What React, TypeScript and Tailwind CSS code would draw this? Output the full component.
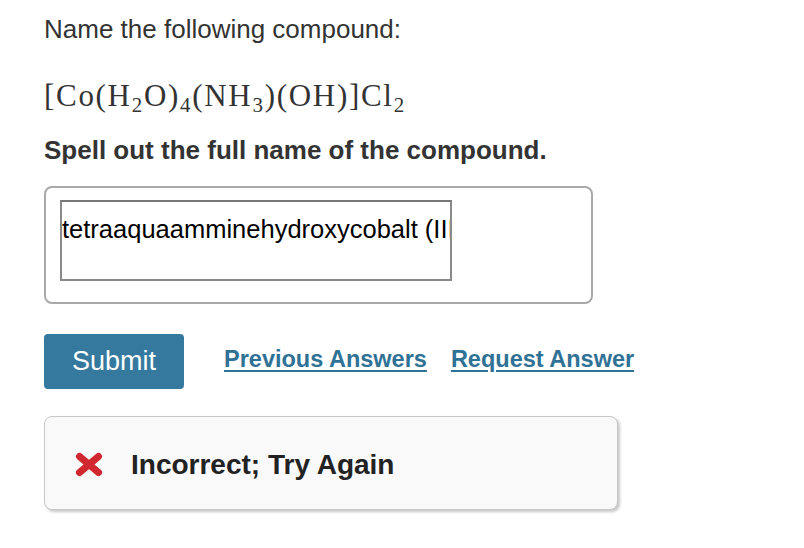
import React from "react";

const sans = { fontFamily: '"Liberation Sans", Arial, Helvetica, sans-serif' };

function Sub({ children }: { children: React.ReactNode }) {
  return <span className="relative top-[6px] text-[21px] leading-none">{children}</span>;
}

export default function App() {
  return (
    <div className="min-h-[548px] w-[804px] bg-white pl-[44px] pt-[14px]" style={sans}>
      <div className="text-[26px] leading-[30px] text-[#333]">Name the following compound:</div>

      <div
        className="mt-[32px] h-[40px] text-[31px] leading-[40px] tracking-[1.7px] text-[#333] whitespace-nowrap"
        style={{ fontFamily: '"Liberation Serif", "Times New Roman", serif' }}
      >
        [Co(H<Sub>2</Sub>O)<Sub>4</Sub>(NH<Sub>3</Sub>)(OH)]Cl<Sub>2</Sub>
      </div>

      <div className="mt-[19px] text-[26px] font-bold leading-[30px] text-[#333]">
        Spell out the full name of the compound.
      </div>

      <div className="mt-[21px] box-border h-[118px] w-[549px] rounded-[8px] border-2 border-[#a9a9a9] pl-[14px] pt-[12px]">
        <div className="box-border h-[81px] w-[392px] overflow-hidden whitespace-nowrap border-2 border-[#8a8a8a] border-t-[#777] pt-[12px] text-[25.5px] leading-[30px] text-black">
          tetraaquaamminehydroxycobalt (III
        </div>
      </div>

      <div className="mt-[30px] flex items-start">
        <button className="flex h-[55px] w-[140px] items-center justify-center rounded-[4px] bg-[#357a9e] text-[27px] text-white">
          Submit
        </button>
        <a className="ml-[40px] mt-[11px] text-[23.5px] font-bold leading-[28px] text-[#2f7296] underline decoration-2 underline-offset-[3px]">
          Previous Answers
        </a>
        <a className="ml-[24px] mt-[11px] text-[23.5px] font-bold leading-[28px] text-[#2f7296] underline decoration-2 underline-offset-[3px]">
          Request Answer
        </a>
      </div>

      <div className="mt-[27px] box-border flex h-[94px] w-[574px] items-start rounded-[8px] border border-[#c8c8c8] bg-[#f9f9f9] pl-[30px] pt-[35px] shadow-[2px_2px_3px_rgba(0,0,0,0.22)]">
        <svg width="28" height="25" viewBox="0 0 28 25" className="shrink-0">
          <path d="M4.5 4.5 L23.5 20.5 M23.5 4.5 L4.5 20.5" stroke="#d0282e" strokeWidth="7" strokeLinecap="round" fill="none" />
        </svg>
        <div className="-mt-[3px] ml-[28px] text-[28px] font-bold leading-[32px] text-[#222]">Incorrect; Try Again</div>
      </div>
    </div>
  );
}
